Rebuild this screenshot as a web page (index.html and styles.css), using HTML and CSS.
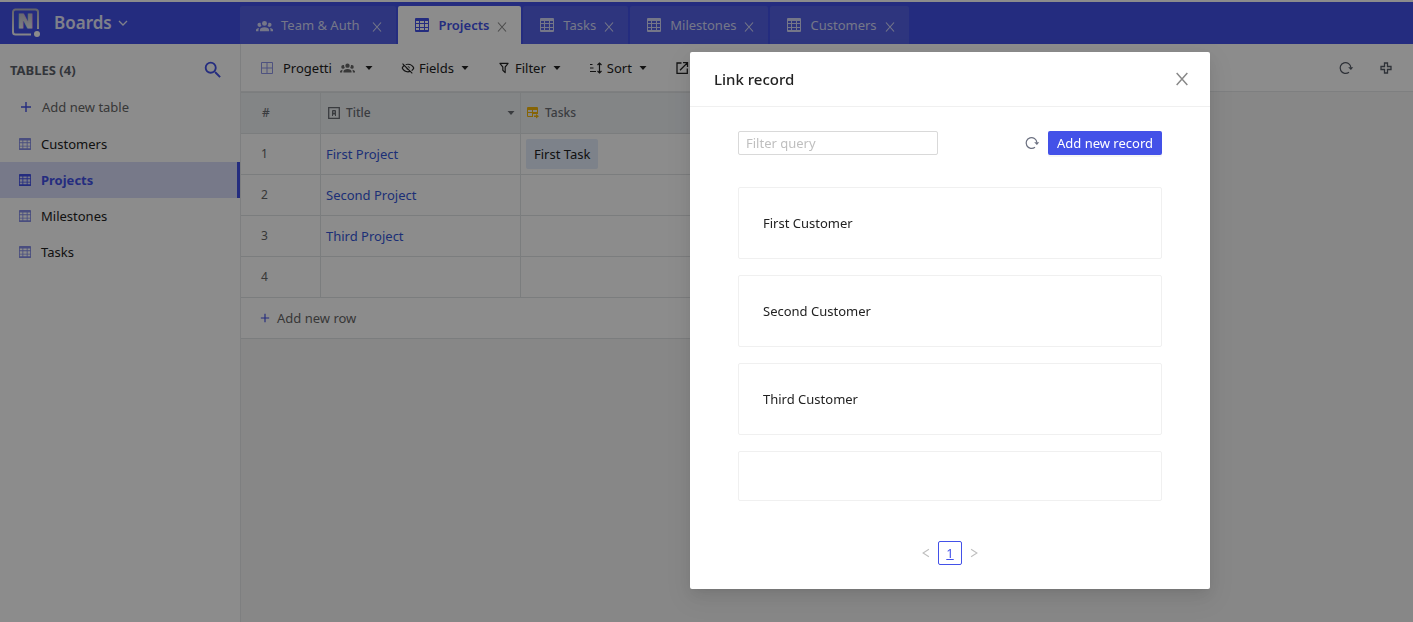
FILE: index.html
```html
<!DOCTYPE html>
<html lang="en">
<head>
    <meta charset="utf-8">
    <title>Boards</title>
    <link rel="stylesheet" href="styles.css">
</head>

<body>
    <!-- shared icons -->
    <svg class="sprite">
        <linearGradient id="metal" x1="0" y1="0" x2="0" y2="1"><stop offset="0" stop-color="#b4b5c4"/><stop offset="1" stop-color="#f4f4f6"/></linearGradient>
        <symbol id="i-table" viewBox="0 0 14 14"><path fill-rule="evenodd" d="M1 0h12a1 1 0 0 1 1 1v12a1 1 0 0 1-1 1H1a1 1 0 0 1-1-1V1a1 1 0 0 1 1-1zM1 3v2h3V3zM5 3v2h4V3zM10 3v2h3V3zM1 6v3h3V6zM5 6v3h4V6zM10 6v3h3V6zM1 10v2h3v-2zM5 10v2h4v-2zM10 10v2h3v-2z"/></symbol>
        <symbol id="i-group" viewBox="0 0 24 24"><path d="M12,5.5A3.5,3.5 0 0,1 15.5,9A3.5,3.5 0 0,1 12,12.5A3.5,3.5 0 0,1 8.5,9A3.5,3.5 0 0,1 12,5.5M5,8C5.56,8 6.08,8.15 6.53,8.42C6.38,9.85 6.8,11.27 7.66,12.38C7.16,13.34 6.16,14 5,14A3,3 0 0,1 2,11A3,3 0 0,1 5,8M19,8A3,3 0 0,1 22,11A3,3 0 0,1 19,14C17.84,14 16.84,13.34 16.34,12.38C17.2,11.27 17.62,9.85 17.47,8.42C17.92,8.15 18.44,8 19,8M5.5,18.25C5.5,16.18 8.41,14.5 12,14.5C15.59,14.5 18.5,16.18 18.5,18.25V20H5.5V18.25M0,20V18.5C0,17.11 1.89,15.94 4.45,15.6C3.86,16.28 3.5,17.22 3.5,18.25V20H0M24,20H20.5V18.25C20.5,17.22 20.14,16.28 19.55,15.6C22.11,15.94 24,17.11 24,18.5V20Z"/></symbol>
        <symbol id="i-close" viewBox="0 0 12 12"><path d="M2 1.500l8 9M10 1.500l-8 9" fill="none" stroke="currentColor" stroke-width="1.100"/></symbol>
        <symbol id="i-caret" viewBox="0 0 8 8"><path d="M0.500 2h7L4 6z"/></symbol>
        <symbol id="i-plus" viewBox="0 0 12 12"><path d="M6 1v10M1 6h10" fill="none" stroke="currentColor" stroke-width="1.400"/></symbol>
        <symbol id="i-reload" viewBox="0 0 16 16"><path d="M11 12.200A5.400 5.400 0 1 1 12.900 7.500" fill="none" stroke="currentColor" stroke-width="1.200"/><path d="M10.200 7.300h5L12.900 10z"/></symbol>
    </svg>

    <header class="topbar">
        <div class="brand">
            <svg class="logo" viewBox="0 0 30 30">
                <path d="M20 26.500H4.500a2.500 2.500 0 0 1-2.500-2.500V4a2.500 2.500 0 0 1 2.500-2.500h20A2.500 2.500 0 0 1 27 4v17" fill="none" stroke="url(#metal)" stroke-width="2"/>
                <text x="14.500" y="20" text-anchor="middle">N</text>
                <circle cx="26" cy="26" r="3"/>
            </svg>
            <button class="base-name">Boards
                <svg viewBox="0 0 10 10"><path d="M1 3l4 4 4-4" fill="none" stroke="currentColor" stroke-width="1.300"/></svg>
            </button>
        </div>
        <nav class="tabs">
            <div class="tab tab-team"><svg class="tab-icon"><use href="#i-group"/></svg><a href="#team">Team &amp; Auth</a><button class="tab-close" aria-label="Close Team &amp; Auth"><svg><use href="#i-close"/></svg></button></div>
            <div class="tab active"><svg class="tab-icon"><use href="#i-table"/></svg><a href="#projects">Projects</a><button class="tab-close" aria-label="Close Projects"><svg><use href="#i-close"/></svg></button></div>
            <div class="tab"><svg class="tab-icon"><use href="#i-table"/></svg><a href="#tasks">Tasks</a><button class="tab-close" aria-label="Close Tasks"><svg><use href="#i-close"/></svg></button></div>
            <div class="tab"><svg class="tab-icon"><use href="#i-table"/></svg><a href="#milestones">Milestones</a><button class="tab-close" aria-label="Close Milestones"><svg><use href="#i-close"/></svg></button></div>
            <div class="tab"><svg class="tab-icon"><use href="#i-table"/></svg><a href="#customers">Customers</a><button class="tab-close" aria-label="Close Customers"><svg><use href="#i-close"/></svg></button></div>
        </nav>
    </header>

    <div class="layout">
        <aside class="sidebar">
            <div class="sidebar-head">
                <h2>TABLES (4)</h2>
                <button class="search" aria-label="Search tables"><svg viewBox="0 0 24 24"><path d="M9.5,3A6.5,6.5 0 0,1 16,9.5C16,11.11 15.41,12.59 14.44,13.73L14.71,14H15.5L20.5,19L19,20.5L14,15.5V14.71L13.73,14.44C12.59,15.41 11.11,16 9.5,16A6.5,6.5 0 0,1 3,9.5A6.5,6.5 0 0,1 9.5,3M9.5,5C7,5 5,7 5,9.5C5,12 7,14 9.5,14C12,14 14,12 14,9.5C14,7 12,5 9.5,5Z"/></svg></button>
            </div>
            <button class="add-table"><svg><use href="#i-plus"/></svg>Add new table</button>
            <nav class="table-list">
                <a href="#customers"><svg><use href="#i-table"/></svg>Customers</a>
                <a href="#projects" class="selected"><svg><use href="#i-table"/></svg>Projects</a>
                <a href="#milestones"><svg><use href="#i-table"/></svg>Milestones</a>
                <a href="#tasks"><svg><use href="#i-table"/></svg>Tasks</a>
            </nav>
        </aside>

        <main class="content">
            <div class="toolbar">
                <button class="view-btn">
                    <svg class="view-icon" viewBox="0 0 14 14"><path d="M1.500 1.500h11v11h-11zM7 1.500v11M1.500 7h11" fill="none" stroke="currentColor"/></svg>
                    Progetti
                    <svg class="view-group"><use href="#i-group"/></svg>
                    <svg class="caret"><use href="#i-caret"/></svg>
                </button>
                <button class="tool">
                    <svg class="tool-icon" viewBox="0 0 24 24"><path d="M2,5.27L3.28,4L20,20.72L18.73,22L15.65,18.92C14.5,19.3 13.28,19.5 12,19.5C7,19.5 2.73,16.39 1,12C1.69,10.24 2.79,8.69 4.19,7.46L2,5.27M12,9A3,3 0 0,1 15,12C15,12.35 14.94,12.69 14.83,13L11,9.17C11.31,9.06 11.65,9 12,9M12,4.5C17,4.5 21.27,7.61 23,12C22.18,14.08 20.79,15.88 19,17.19L17.58,15.76C18.94,14.82 20.06,13.54 20.82,12C19.17,8.64 15.76,6.5 12,6.5C10.91,6.5 9.84,6.68 8.84,7L7.3,5.47C8.74,4.85 10.33,4.5 12,4.5M3.18,12C4.83,15.36 8.24,17.5 12,17.5C12.69,17.5 13.37,17.43 14,17.29L11.72,15C10.29,14.85 9.15,13.71 9,12.28L5.6,8.87C4.61,9.72 3.78,10.78 3.18,12Z"/></svg>
                    Fields
                    <svg class="caret"><use href="#i-caret"/></svg>
                </button>
                <button class="tool">
                    <svg class="tool-icon" viewBox="0 0 24 24"><path d="M15,19.88C15.04,20.18 14.94,20.5 14.71,20.71C14.32,21.1 13.69,21.1 13.3,20.71L9.29,16.7C9.06,16.47 8.96,16.16 9,15.87V10.75L4.21,4.62C3.87,4.19 3.95,3.56 4.38,3.22C4.57,3.08 4.78,3 5,3H19C19.22,3 19.43,3.08 19.62,3.22C20.05,3.56 20.13,4.19 19.79,4.62L15,10.75V19.88M7.04,5L11,10.06V15.58L13,17.58V10.05L16.96,5H7.04Z"/></svg>
                    Filter
                    <svg class="caret"><use href="#i-caret"/></svg>
                </button>
                <button class="tool">
                    <svg class="tool-icon" viewBox="0 0 14 14"><path d="M1 3.500h2.500M1 7h3.500M1 10.500h6M10.500 2v10M8.500 4l2-2 2 2M8.500 10l2 2 2-2" fill="none" stroke="currentColor" stroke-width="1.200"/></svg>
                    Sort
                    <svg class="caret"><use href="#i-caret"/></svg>
                </button>
                <button class="tool" aria-label="Share view">
                    <svg class="tool-icon" viewBox="0 0 14 14"><path d="M6.500 2H2v10.300h10.300V7.500M8 1.700h4.500V6M12.300 1.900L5 9.300" fill="none" stroke="currentColor" stroke-width="1.300"/></svg>
                </button>
                <div class="toolbar-right">
                    <button aria-label="Reload"><svg><use href="#i-reload"/></svg></button>
                    <button aria-label="Add row"><svg viewBox="0 0 16 16"><path d="M6.500 3h3v3.500H13v3H9.500V13h-3V9.500H3v-3h3.500z" fill="none" stroke="currentColor" stroke-width="1.300"/></svg></button>
                </div>
            </div>

            <table class="grid">
                <thead>
                    <tr>
                        <th class="col-num">#</th>
                        <th class="col-title"><div class="th">
                            <svg class="field-icon" viewBox="0 0 12 12"><path d="M.7.700h10.600v10.600H.7z" fill="none" stroke="currentColor" stroke-width="1.300"/><path fill-rule="evenodd" d="M4 9V4q0-1 1-1h2q1 0 1 1v5H7V7.500H5V9zM5 4.500v1h2v-1z"/></svg>
                            Title
                            <svg class="caret"><use href="#i-caret"/></svg>
                        </div></th>
                        <th class="col-link"><div class="th">
                            <svg class="field-icon link" viewBox="0 0 12 12"><path fill-rule="evenodd" d="M1 0h9a1 1 0 0 1 1 1v6H6v3H1a1 1 0 0 1-1-1V1a1 1 0 0 1 1-1zM1 3v2h4V3zM6 3v2h4V3zM1 6v3h4V6z"/><path d="M7 8.500h2V7l3 2.200L9 11.500V10H7z"/></svg>
                            Tasks
                        </div></th>
                    </tr>
                </thead>
                <tbody>
                    <tr><td class="num">1</td><td class="title">First Project</td><td><span class="chip">First Task</span></td></tr>
                    <tr><td class="num">2</td><td class="title">Second Project</td><td></td></tr>
                    <tr><td class="num">3</td><td class="title">Third Project</td><td></td></tr>
                    <tr><td class="num">4</td><td></td><td></td></tr>
                    <tr><td colspan="3"><button class="add-row"><svg><use href="#i-plus"/></svg>Add new row</button></td></tr>
                </tbody>
            </table>
        </main>
    </div>

    <div class="overlay">
        <section class="modal" role="dialog" aria-labelledby="modal-title">
            <div class="modal-head">
                <h1 id="modal-title">Link record</h1>
                <button class="modal-close" aria-label="Close"><svg><use href="#i-close"/></svg></button>
            </div>
            <div class="modal-body">
                <div class="query">
                    <input type="text" placeholder="Filter query" aria-label="Filter query">
                    <button class="reload" aria-label="Reload records"><svg><use href="#i-reload"/></svg></button>
                    <button class="primary">Add new record</button>
                </div>
                <div class="cards">
                    <div class="card">First Customer</div>
                    <div class="card">Second Customer</div>
                    <div class="card">Third Customer</div>
                    <div class="card"></div>
                </div>
                <nav class="pages" aria-label="Pages">
                    <button aria-label="Previous page" disabled><svg viewBox="0 0 12 12"><path d="M9.500 1.500L2.500 6l7 4.500" fill="none" stroke="currentColor" stroke-width="1.300"/></svg></button>
                    <a href="#page-1">1</a>
                    <button aria-label="Next page" disabled><svg viewBox="0 0 12 12"><path d="M2.500 1.500L9.500 6l-7 4.500" fill="none" stroke="currentColor" stroke-width="1.300"/></svg></button>
                </nav>
            </div>
        </section>
    </div>
</body>
</html>
```
FILE: styles.css
```css
*{
    box-sizing: border-box;
}
body{
    margin: 0;
    min-height: 100vh;
    display: flex;
    flex-direction: column;
    overflow: hidden;
    font-family: "Noto Sans", sans-serif;
    font-size: 13px;
    line-height: 20px;
    color: #222;
    background: #fff;
}
button{
    padding: 0;
    border: 0;
    background: none;
    font: inherit;
    color: inherit;
    display: flex;
    align-items: center;
}
a{
    color: inherit;
    text-decoration: none;
}
svg{
    flex: none;
    fill: currentColor;
}
.sprite{
    position: absolute;
    width: 0;
    height: 0;
}

/* top bar */
.topbar{
    display: flex;
    height: 44px;
    border-top: 2px solid #fff;
    background: #4351e8;
    color: #fff;
}
.brand{
    width: 240px;
    padding-left: 11px;
    display: flex;
    align-items: center;
    gap: 13px;
}
.logo{
    width: 30px;
    height: 30px;
}
.logo text{
    font: bold 19px "DejaVu Sans", sans-serif;
    fill: url(#metal);
    stroke: url(#metal);
}
.base-name{
    gap: 6px;
    font-size: 17px;
    font-weight: 600;
    color: #e8eafc;
}
.base-name svg{
    width: 10px;
    height: 10px;
}
.tabs{
    display: flex;
    gap: 2px;
    padding-top: 4px;
}
.tab{
    display: flex;
    align-items: center;
    padding: 0 13px 0 17px;
    background: #5461e6;
    border-radius: 2px 2px 0 0;
    color: #d6d9f8;
}
.tab-icon{
    width: 14px;
    height: 14px;
    margin-right: 9px;
}
.tab.active{
    background: #fff;
    color: #4351e8;
    font-weight: 600;
}
.tab-close{
    margin-left: 7px;
    padding-top: 3px;
}
.tab-team{
    padding-left: 16px;
}
.tab-team .tab-icon{
    width: 17px;
    height: 17px;
    margin-right: 8px;
}
.tab-team .tab-close{
    margin-left: 12px;
}
.tab.active .tab-close{
    color: #888;
}
.tab-close svg{
    width: 12px;
    height: 12px;
}

.layout{
    flex: 1;
    display: flex;
}

/* sidebar */
.sidebar{
    width: 240px;
}
.sidebar-head{
    display: flex;
    align-items: center;
    justify-content: space-between;
    height: 48px;
    padding: 4px 16px 0 10px;
}
.sidebar-head h2{
    margin: 0;
    font-size: 13px;
    font-weight: 700;
    color: #5c626b;
}
.search{
    color: #4351e8;
}
.search svg{
    width: 22px;
    height: 22px;
}
.add-table{
    gap: 10px;
    height: 30px;
    margin-bottom: 4px;
    padding-left: 20px;
    color: #666;
}
.add-table svg{
    width: 12px;
    height: 12px;
    color: #4351e8;
}
.table-list a{
    display: flex;
    align-items: center;
    gap: 10px;
    height: 36px;
    padding-left: 19px;
}
.table-list svg{
    width: 12px;
    height: 12px;
    color: #858de8;
}
.table-list .selected{
    background: #d9dcfa;
    border-right: 3px solid #4351e8;
    color: #4351e8;
    font-weight: 700;
}
.table-list .selected svg{
    color: #4351e8;
}

/* main area */
.content{
    flex: 1;
    border-left: 1px solid #e6e8ea;
    background: #f6f6f6;
}
.toolbar{
    display: flex;
    align-items: center;
    height: 48px;
    padding: 0 19px;
    border-bottom: 1px solid #e6e8ea;
    background: #fff;
}
.view-btn{
    margin-right: 28px;
}
.view-icon{
    width: 14px;
    height: 14px;
    margin-right: 9px;
    color: #8e95e8;
}
.view-group{
    width: 15px;
    height: 15px;
    margin: 0 10px 0 8px;
    color: #666;
}
.caret{
    width: 8px;
    height: 8px;
}
.tool{
    gap: 4px;
    margin-right: 28px;
}
.tool .caret{
    margin-left: 3px;
}
.tool-icon{
    width: 14px;
    height: 14px;
}
.toolbar-right{
    display: flex;
    gap: 24px;
    margin-left: auto;
    color: #555b66;
}
.toolbar-right svg{
    width: 16px;
    height: 16px;
    display: block;
}
.grid{
    border-collapse: separate;
    border-spacing: 0;
    table-layout: fixed;
    width: 680px;
    background: #fff;
}
.grid tr{
    height: 41px;
}
.grid thead tr{
    height: 42px;
}
.grid th,
.grid td{
    padding: 0 5px;
    border: 1px solid #e1e3e5;
    border-width: 0 1px 1px 0;
    text-align: left;
}
.grid th{
    border-top-width: 1px;
    background: #eff2f5;
    color: #6a6e74;
    font-size: 12px;
    font-weight: 500;
}
.grid .col-num{
    width: 80px;
    padding-left: 21px;
}
.col-title{
    width: 200px;
}
.th{
    display: flex;
    align-items: center;
    gap: 6px;
    padding-left: 2px;
}
.col-link .th{
    padding-left: 1px;
}
.col-title .caret{
    margin-left: auto;
}
.field-icon{
    width: 12px;
    height: 12px;
}
.field-icon.link{
    color: #f5b70a;
}
.grid .num{
    padding-left: 20px;
    color: #666;
    font-size: 12px;
}
.title{
    color: #3557d8;
}
.chip{
    display: inline-block;
    padding: 5px 8px;
    background: #e4edfb;
    border-radius: 2px;
}
.add-row{
    gap: 7px;
    padding-left: 14px;
    color: #666;
}
.add-row svg{
    width: 10px;
    height: 10px;
    color: #4351e8;
}

/* link record dialog */
.overlay{
    position: fixed;
    inset: 0;
    display: flex;
    justify-content: flex-end;
    align-items: flex-start;
    padding: 52px 203px 0 0;
    background: rgba(0, 0, 0, .45);
}
.modal{
    width: 520px;
    background: #fff;
    border-radius: 2px;
    box-shadow: 0 3px 6px -4px rgba(0, 0, 0, .12), 0 6px 16px rgba(0, 0, 0, .08), 0 9px 28px 8px rgba(0, 0, 0, .05);
}
.modal-head{
    display: flex;
    align-items: center;
    justify-content: space-between;
    height: 55px;
    padding: 0 20px 0 24px;
    border-bottom: 1px solid #f0f0f0;
}
.modal-head h1{
    margin: 0;
    font-size: 15px;
    font-weight: 500;
}
.modal-close{
    color: #888;
}
.modal-close svg{
    width: 16px;
    height: 16px;
}
.modal-body{
    padding: 24px 48px;
}
.query{
    display: flex;
    align-items: center;
    height: 24px;
    margin-bottom: 32px;
}
.query input{
    width: 200px;
    height: 24px;
    padding: 0 7px;
    border: 1px solid #d9d9d9;
    border-radius: 2px;
    font: inherit;
}
.query input::placeholder{
    color: #bfbfbf;
}
.reload{
    margin: 0 8px 0 auto;
    color: #6b7080;
}
.reload svg{
    width: 16px;
    height: 16px;
}
.primary{
    height: 24px;
    padding: 0 9px;
    border-radius: 2px;
    background: #4351e8;
    box-shadow: 0 2px 0 rgba(0, 0, 0, .04);
    color: #fff;
}
.cards{
    display: flex;
    flex-direction: column;
    gap: 16px;
}
.card{
    min-height: 50px;
    padding: 25px 24px;
    border: 1px solid #f0f0f0;
    border-radius: 2px;
}
.card:empty{
    padding: 24px;
}
.pages{
    display: flex;
    justify-content: center;
    margin-top: 40px;
}
.pages a,
.pages button{
    display: flex;
    align-items: center;
    justify-content: center;
    width: 24px;
    height: 24px;
}
.pages button{
    color: #bfbfbf;
}
.pages svg{
    width: 10px;
    height: 10px;
}
.pages a{
    border: 1px solid #4351e8;
    border-radius: 2px;
    color: #4351e8;
    text-decoration: underline;
}
```
